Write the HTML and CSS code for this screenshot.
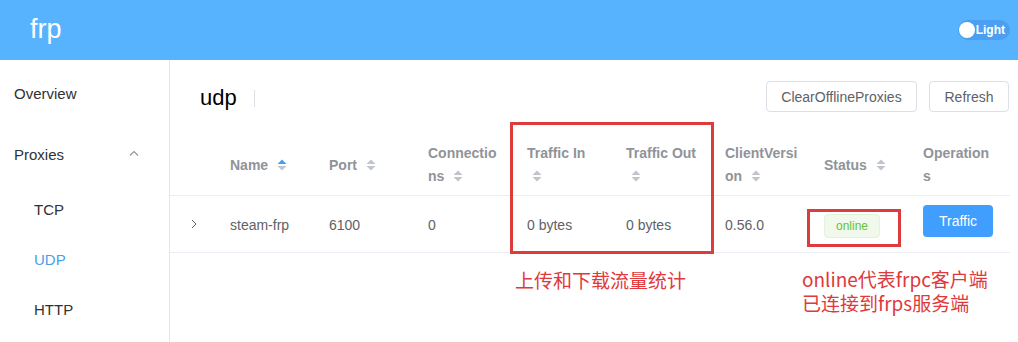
FILE: index.html
```html
<!DOCTYPE html>
<html lang="zh-CN">
<head>
  <meta charset="UTF-8">
  <meta name="viewport" content="width=device-width, initial-scale=1.0">
  <title>frp</title>
  <link rel="stylesheet" href="styles.css">
</head>
<body>
  <header class="header">
    <div class="brand">frp</div>
    <div class="theme-switch">
      <span class="knob"></span>
      <span class="theme-label">Light</span>
    </div>
  </header>

  <div class="main">
    <aside class="sidebar">
      <div class="menu-item overview">Overview</div>
      <div class="menu-item proxies">
        <span>Proxies</span>
        <svg class="caret" width="10" height="6" viewBox="0 0 10 6"><path d="M1 5.5 L5 1.5 L9 5.5" fill="none" stroke="#909399" stroke-width="1.1"/></svg>
      </div>
      <div class="sub-item">TCP</div>
      <div class="sub-item active">UDP</div>
      <div class="sub-item">HTTP</div>
    </aside>

    <section class="content">
      <div class="toolbar">
        <h2 class="title">udp</h2>
        <span class="title-divider"></span>
        <div class="actions">
          <button class="btn btn-clear">ClearOfflineProxies</button>
          <button class="btn btn-refresh">Refresh</button>
        </div>
      </div>

      <table class="proxy-table">
        <colgroup>
          <col style="width:48px">
          <col style="width:99px"><col style="width:99px"><col style="width:99px"><col style="width:99px">
          <col style="width:99px"><col style="width:99px"><col style="width:99px"><col style="width:99px">
        </colgroup>
        <thead>
          <tr>
            <th></th>
            <th>Name <svg class="sort" width="10" height="14" viewBox="0 0 10 14"><path d="M5 1.5 L9.5 6 L0.5 6 Z" fill="#409eff"/><path d="M0.5 8 L9.5 8 L5 12.5 Z" fill="#c0c4cc"/></svg></th>
            <th>Port <svg class="sort" width="10" height="14" viewBox="0 0 10 14"><path d="M5 1.5 L9.5 6 L0.5 6 Z" fill="#c0c4cc"/><path d="M0.5 8 L9.5 8 L5 12.5 Z" fill="#c0c4cc"/></svg></th>
            <th>Connections <svg class="sort" width="10" height="14" viewBox="0 0 10 14"><path d="M5 1.5 L9.5 6 L0.5 6 Z" fill="#c0c4cc"/><path d="M0.5 8 L9.5 8 L5 12.5 Z" fill="#c0c4cc"/></svg></th>
            <th>Traffic In <svg class="sort" width="10" height="14" viewBox="0 0 10 14"><path d="M5 1.5 L9.5 6 L0.5 6 Z" fill="#c0c4cc"/><path d="M0.5 8 L9.5 8 L5 12.5 Z" fill="#c0c4cc"/></svg></th>
            <th>Traffic Out <svg class="sort" width="10" height="14" viewBox="0 0 10 14"><path d="M5 1.5 L9.5 6 L0.5 6 Z" fill="#c0c4cc"/><path d="M0.5 8 L9.5 8 L5 12.5 Z" fill="#c0c4cc"/></svg></th>
            <th>ClientVersion <svg class="sort" width="10" height="14" viewBox="0 0 10 14"><path d="M5 1.5 L9.5 6 L0.5 6 Z" fill="#c0c4cc"/><path d="M0.5 8 L9.5 8 L5 12.5 Z" fill="#c0c4cc"/></svg></th>
            <th>Status <svg class="sort" width="10" height="14" viewBox="0 0 10 14"><path d="M5 1.5 L9.5 6 L0.5 6 Z" fill="#c0c4cc"/><path d="M0.5 8 L9.5 8 L5 12.5 Z" fill="#c0c4cc"/></svg></th>
            <th class="last">Operations</th>
          </tr>
        </thead>
        <tbody>
          <tr>
            <td class="expand"><svg width="6" height="10" viewBox="0 0 6 10"><path d="M1 1 L5 5 L1 9" fill="none" stroke="#606266" stroke-width="1"/></svg></td>
            <td>steam-frp</td>
            <td>6100</td>
            <td>0</td>
            <td>0 bytes</td>
            <td>0 bytes</td>
            <td>0.56.0</td>
            <td><span class="tag">online</span></td>
            <td><button class="btn-traffic">Traffic</button></td>
          </tr>
        </tbody>
      </table>
    </section>
  </div>

  <!-- annotations drawn over the screenshot -->
  <div class="mark mark-traffic"></div>
  <div class="mark mark-status"></div>
  <div class="note note-traffic">上传和下载流量统计</div>
  <div class="note note-status">online代表frpc客户端<br>已连接到frps服务端</div>
</body>
</html>
```

FILE: styles.css
```css
body {
  margin: 0;
  font-family: "Liberation Sans", "Noto Sans CJK SC", sans-serif;
  background: #fff;
  position: relative;
  width: 1018px;
  height: 342px;
  overflow: hidden;
}

.header {
  height: 60px;
  background: #58b3ff;
  display: flex;
  align-items: center;
  justify-content: space-between;
  padding: 0 8px 0 30px;
}

.brand {
  color: #fff;
  font-size: 27px;
  line-height: 1;
  margin-top: -2px;
}

.theme-switch {
  display: flex;
  align-items: center;
  height: 20px;
  padding: 0 5px 0 1px;
  border-radius: 10px;
  background: #4c9ff0;
}

.knob {
  width: 16px;
  height: 16px;
  border-radius: 50%;
  background: #fff;
}

.theme-label {
  color: #fff;
  font-size: 12px;
  font-weight: bold;
  margin-left: 1px;
}

.main {
  display: flex;
  height: 282px;
}

.sidebar {
  width: 169px;
  border-right: 1px solid #e6e6e6;
  padding-top: 3px;
  color: #303133;
  font-size: 15px;
}

.menu-item {
  display: flex;
  align-items: center;
  justify-content: space-between;
  padding: 0 30px 0 14px;
}

.overview {
  height: 60px;
}

.proxies {
  height: 62px;
}

.caret {
  margin-top: -2px;
}

.sub-item {
  height: 50px;
  line-height: 50px;
  padding-left: 34px;
}

.sub-item.active {
  color: #4a9fe6;
}

.content {
  flex: 1;
  padding-right: 8px;
}

.toolbar {
  display: flex;
  align-items: center;
  height: 31px;
  margin-top: 21px;
  padding-left: 30px;
}

.title {
  margin: 0;
  font-size: 22px;
  font-weight: normal;
  color: #000;
  margin-top: 2px;
}

.title-divider {
  width: 1px;
  height: 17px;
  background: #dcdfe6;
  margin-left: 17px;
  margin-top: 4px;
}

.actions {
  margin-left: auto;
  display: flex;
  gap: 12px;
  margin-right: 1px;
}

.btn {
  height: 31px;
  border: 1px solid #dcdfe6;
  border-radius: 4px;
  background: #fff;
  color: #606266;
  font-family: inherit;
  font-size: 14px;
  padding: 0;
}

.btn-clear {
  width: 151px;
}

.btn-refresh {
  width: 80px;
}

.proxy-table {
  margin-top: 21px;
  border-collapse: collapse;
  table-layout: fixed;
  width: 840px;
}

.proxy-table th {
  text-align: left;
  padding: 9px 12px 7px;
  line-height: 23px;
  font-size: 14px;
  font-weight: bold;
  color: #909399;
  word-break: break-all;
  border-bottom: 1px solid #ebeef5;
  vertical-align: middle;
}

.proxy-table th.last {
  padding-right: 16px;
}

.sort {
  vertical-align: -2px;
  margin-left: 5px;
}

.proxy-table td {
  padding: 13px 12px 11px;
  height: 32px;
  font-size: 14px;
  color: #606266;
  border-bottom: 1px solid #ebeef5;
  vertical-align: middle;
}

.proxy-table td.expand {
  padding: 0 0 0 21px;
}

.tag {
  display: inline-block;
  height: 22px;
  line-height: 22px;
  padding: 0 11px;
  font-size: 12px;
  color: #67c23a;
  background: #f0f9eb;
  border: 1px solid #e1f3d8;
  border-radius: 4px;
  margin-top: 2px;
}

.btn-traffic {
  width: 70px;
  height: 32px;
  border: none;
  border-radius: 4px;
  background: #409eff;
  color: #fff;
  font-family: inherit;
  font-size: 14px;
  margin-top: -10px;
}

.mark {
  position: absolute;
  border: 3px solid #dc3c3c;
  box-sizing: border-box;
}

.mark-traffic {
  left: 510px;
  top: 122px;
  width: 204px;
  height: 132px;
}

.mark-status {
  left: 807px;
  top: 209px;
  width: 94px;
  height: 38px;
}

.note {
  position: absolute;
  color: #e0393b;
  font-family: "Noto Sans CJK SC", sans-serif;
  font-size: 19px;
  line-height: 24px;
}

.note-traffic {
  left: 515px;
  top: 268px;
}

.note-status {
  left: 802px;
  top: 267px;
}
```
